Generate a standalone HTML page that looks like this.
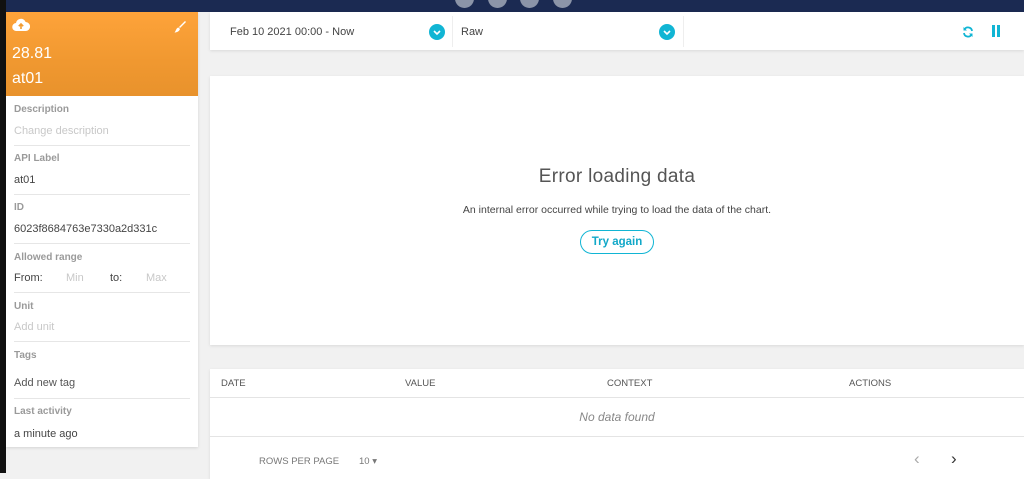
<!DOCTYPE html>
<html><head><meta charset="utf-8"><style>
*{margin:0;padding:0;box-sizing:border-box}
body{width:1024px;height:473px;overflow:hidden;background:#f1f1f1;font-family:"Liberation Sans",sans-serif;position:relative}
.abs{position:absolute}
.top{left:0;top:0;width:1024px;height:12px;background:#1b2a52}
.dot{top:-11px;width:19px;height:19px;border-radius:50%;background:#8b94a8}
.lstrip{left:0;top:0;width:6px;height:473px;background:#111}
.side{left:6px;top:12px;width:192px;height:435px;background:#fff;box-shadow:0 1px 3px rgba(0,0,0,.12)}
.head{left:6px;top:12px;width:192px;height:84px;background:linear-gradient(#fea33a,#f09830 60%,#e8922c)}
.lab{font-size:10px;font-weight:bold;color:#9a9a9a;left:14px}
.val{font-size:11px;color:#444;left:14px}
.ph{color:#c8c8c8}
.sep{left:14px;width:176px;height:1px;background:#e6e6e6}
.card{background:#fff;box-shadow:0 1px 3px rgba(0,0,0,.1)}
.chev{width:16px;height:16px;border-radius:50%;background:#11b5d4}
.th{font-size:9.5px;color:#555;top:378px}
</style></head><body>
<div class="abs top"></div>
<div class="abs dot" style="left:455px"></div>
<div class="abs dot" style="left:488px"></div>
<div class="abs dot" style="left:520px"></div>
<div class="abs dot" style="left:553px"></div>
<div class="abs lstrip"></div>
<div class="abs side"></div>
<div class="abs head"></div>
<svg class="abs" style="left:12px;top:18px" width="18" height="14" viewBox="0 0 18 14"><path d="M4.5 13a4 4 0 0 1-.5-8 5 5 0 0 1 9.6-1A4.5 4.5 0 0 1 13.5 13z" fill="#fff"/><path d="M9 11V6M6.8 8.2 9 6l2.2 2.2" stroke="#f29c32" stroke-width="1.6" fill="none"/></svg>
<svg class="abs" style="left:174px;top:20px" width="12" height="13" viewBox="0 0 12 13"><path d="M11 1 5 7l1 1 6-6z" fill="#fff"/><path d="M4.5 7.5 6 9c-1 3-4 3.5-5.5 3.5C2 11 2 8 4.5 7.5z" fill="#fff"/></svg>
<div class="abs" style="left:12px;top:45px;color:#fff;font-size:16px">28.81</div>
<div class="abs" style="left:12px;top:70px;color:#fff;font-size:16px">at01</div>
<div class="abs lab" style="top:104px">Description</div>
<div class="abs val ph" style="top:125px">Change description</div>
<div class="abs sep" style="top:145px"></div>
<div class="abs lab" style="top:153px">API Label</div>
<div class="abs val" style="top:174px">at01</div>
<div class="abs sep" style="top:194px"></div>
<div class="abs lab" style="top:202px">ID</div>
<div class="abs val" style="top:223px">6023f8684763e7330a2d331c</div>
<div class="abs sep" style="top:243px"></div>
<div class="abs lab" style="top:252px">Allowed range</div>
<div class="abs val" style="top:272px">From:</div>
<div class="abs val ph" style="top:272px;left:66px">Min</div>
<div class="abs val" style="top:272px;left:110px">to:</div>
<div class="abs val ph" style="top:272px;left:146px">Max</div>
<div class="abs sep" style="top:292px"></div>
<div class="abs lab" style="top:301px">Unit</div>
<div class="abs val ph" style="top:321px">Add unit</div>
<div class="abs sep" style="top:341px"></div>
<div class="abs lab" style="top:350px">Tags</div>
<div class="abs val" style="top:377px;color:#555">Add new tag</div>
<div class="abs sep" style="top:398px"></div>
<div class="abs lab" style="top:406px">Last activity</div>
<div class="abs val" style="top:428px">a minute ago</div>

<div class="abs card" style="left:210px;top:12px;width:814px;height:38px"></div>
<div class="abs" style="left:230px;top:26px;font-size:11px;color:#444">Feb 10 2021 00:00 - Now</div>
<div class="abs chev" style="left:429px;top:24px"></div>
<svg class="abs" style="left:429px;top:24px" width="16" height="16"><path d="M5 7l3 3 3-3" stroke="#fff" stroke-width="1.6" fill="none"/></svg>
<div class="abs" style="left:452px;top:16px;width:1px;height:31px;background:#eee"></div>
<div class="abs" style="left:461px;top:26px;font-size:11px;color:#444">Raw</div>
<div class="abs chev" style="left:659px;top:24px"></div>
<svg class="abs" style="left:659px;top:24px" width="16" height="16"><path d="M5 7l3 3 3-3" stroke="#fff" stroke-width="1.6" fill="none"/></svg>
<div class="abs" style="left:683px;top:16px;width:1px;height:31px;background:#eee"></div>
<svg class="abs" style="left:962px;top:26px" width="12" height="12" viewBox="0 0 12 12"><path d="M10 5A4 4 0 0 0 2.5 3.5M2 7a4 4 0 0 0 7.5 1.5" stroke="#11b5d4" stroke-width="1.8" fill="none"/><path d="M1.5 1v3.5H5zM10.5 11V7.5H7z" fill="#11b5d4"/></svg>
<div class="abs" style="left:992px;top:25px;width:3px;height:12px;background:#11b5d4"></div>
<div class="abs" style="left:997px;top:25px;width:3px;height:12px;background:#11b5d4"></div>

<div class="abs card" style="left:210px;top:76px;width:814px;height:269px"></div>
<div class="abs" style="left:210px;top:166px;width:814px;text-align:center;font-size:19px;color:#555;letter-spacing:.3px">Error loading data</div>
<div class="abs" style="left:210px;top:204px;width:814px;text-align:center;font-size:10.5px;color:#444">An internal error occurred while trying to load the data of the chart.</div>
<div class="abs" style="left:580px;top:230px;width:74px;height:24px;border:1.5px solid #11b5d4;border-radius:12px;display:flex;align-items:center;justify-content:center;font-size:11.5px;font-weight:bold;color:#11a8c8">Try again</div>

<div class="abs card" style="left:210px;top:369px;width:814px;height:110px"></div>
<div class="abs th" style="left:221px">DATE</div>
<div class="abs th" style="left:405px">VALUE</div>
<div class="abs th" style="left:607px">CONTEXT</div>
<div class="abs th" style="left:849px">ACTIONS</div>
<div class="abs" style="left:210px;top:397px;width:814px;height:1px;background:#e4e4e4"></div>
<div class="abs" style="left:210px;top:410px;width:814px;text-align:center;font-size:12px;font-style:italic;color:#888">No data found</div>
<div class="abs" style="left:210px;top:436px;width:814px;height:1px;background:#e4e4e4"></div>
<div class="abs" style="left:259px;top:456px;font-size:9.5px;color:#777">ROWS PER PAGE</div>
<div class="abs" style="left:359px;top:456px;font-size:9.5px;color:#777">10 ▾</div>
<div class="abs" style="left:914px;top:449px;font-size:17px;color:#aaa">&#8249;</div>
<div class="abs" style="left:951px;top:449px;font-size:17px;color:#333">&#8250;</div>
</body></html>
